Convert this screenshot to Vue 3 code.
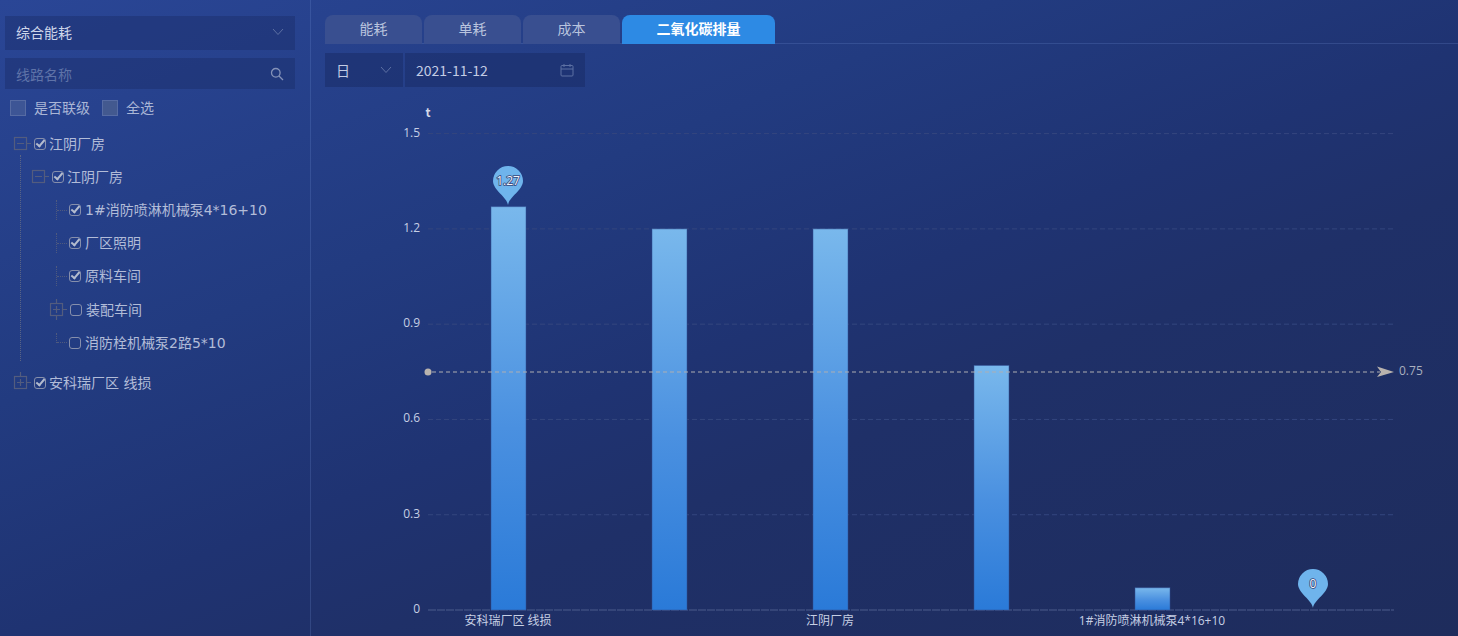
<script setup>
const tabs = ['能耗', '单耗', '成本', '二氧化碳排量']

const treeChildren = [
  { label: '江阴厂房', level: 1, toggle: 'minus', checked: true },
  { label: '1#消防喷淋机械泵4*16+10', level: 2, checked: true },
  { label: '厂区照明', level: 2, checked: true },
  { label: '原料车间', level: 2, checked: true },
  { label: '装配车间', level: 2, toggle: 'plus', checked: false },
  { label: '消防栓机械泵2路5*10', level: 2, checked: false, last: true },
]

const y0 = 610
const perUnit = 317.6
const yOf = (v) => y0 - v * perUnit

const ticks = [1.5, 1.2, 0.9, 0.6, 0.3]
const values = [1.27, 1.2, 1.2, 0.77, 0.07, 0]
const bars = values.map((v, i) => ({ x: 491 + i * 161, y: yOf(v), h: v * perUnit }))
const xLabels = [
  { text: '安科瑞厂区 线损', x: 508 },
  { text: '江阴厂房', x: 830 },
  { text: '1#消防喷淋机械泵4*16+10', x: 1152 },
]
const pins = [
  { text: '1.27', x: 508, tip: 205 },
  { text: '0', x: 1313, tip: 608 },
]
const pinPath = (p) => {
  const top = p.tip - 39
  const cy = top + 15
  return `M${p.x} ${p.tip}C${p.x - 1} ${p.tip - 8} ${p.x - 15} ${cy + 9} ${p.x - 15} ${cy}A15 15 0 1 1 ${p.x + 15} ${cy}C${p.x + 15} ${cy + 9} ${p.x + 1} ${p.tip - 8} ${p.x} ${p.tip}Z`
}
</script>

<template>
  <div class="page">
    <aside class="side">
      <div class="field select-field">
        <span>综合能耗</span>
        <svg class="chev" width="12" height="8" viewBox="0 0 12 8"><path d="M1 1l5 5.5L11 1" /></svg>
      </div>
      <div class="field search-field">
        <span class="placeholder">线路名称</span>
        <svg class="search" width="14" height="14" viewBox="0 0 14 14">
          <circle cx="5.8" cy="5.8" r="4.3" />
          <path d="M9 9l4 4" />
        </svg>
      </div>
      <div class="options">
        <label class="opt"><i class="box"></i><span>是否联级</span></label>
        <label class="opt"><i class="box alt"></i><span>全选</span></label>
      </div>

      <div class="tree">
        <div class="row">
          <svg class="toggle" width="13" height="13" viewBox="0 0 13 13">
            <rect x="0.5" y="0.5" width="12" height="12" />
            <path d="M3 6.5h7M13 6.5h4" />
          </svg>
          <span class="check on"></span>
          <span class="name">江阴厂房</span>
        </div>
        <div class="group">
          <div
            v-for="node in treeChildren"
            :key="node.label"
            class="row"
            :class="['lv' + node.level, { last: node.last }]"
          >
            <svg v-if="node.toggle" class="toggle" width="13" height="13" viewBox="0 0 13 13">
              <rect x="0.5" y="0.5" width="12" height="12" />
              <path v-if="node.toggle === 'minus'" d="M3 6.5h7M13 6.5h4" />
              <path v-else d="M3 6.5h7M6.5 3v7M13 6.5h4M6.5 -4v4M6.5 13v4" />
            </svg>
            <span v-else class="joint"></span>
            <span class="check" :class="{ on: node.checked }"></span>
            <span class="name">{{ node.label }}</span>
          </div>
        </div>
        <div class="row">
          <svg class="toggle" width="13" height="13" viewBox="0 0 13 13">
            <rect x="0.5" y="0.5" width="12" height="12" />
            <path d="M3 6.5h7M6.5 3v7M13 6.5h4M6.5 -4v4" />
          </svg>
          <span class="check on"></span>
          <span class="name">安科瑞厂区 线损</span>
        </div>
      </div>
    </aside>

    <main class="main">
      <div class="tabs">
        <div v-for="(t, i) in tabs" :key="t" class="tab" :class="{ active: i === 3 }">{{ t }}</div>
      </div>
      <div class="filters">
        <div class="field unit">
          <span>日</span>
          <svg class="chev" width="12" height="8" viewBox="0 0 12 8"><path d="M1 1l5 5.5L11 1" /></svg>
        </div>
        <div class="field date">
          <span>2021-11-12</span>
          <svg class="cal" width="14" height="14" viewBox="0 0 14 14">
            <rect x="1" y="2.5" width="12" height="10.5" rx="1" />
            <path d="M1 6h12M4 1v3M10 1v3" />
          </svg>
        </div>
      </div>

      <svg class="chart" width="1147" height="541" viewBox="311 95 1147 541">
        <defs>
          <linearGradient id="barFill" x1="0" y1="0" x2="0" y2="1">
            <stop offset="0" stop-color="#79b8ec" />
            <stop offset="0.55" stop-color="#4a90e0" />
            <stop offset="1" stop-color="#2a7ad8" />
          </linearGradient>
        </defs>

        <text class="axis-name" x="428" y="117" text-anchor="middle">t</text>

        <g v-for="t in ticks" :key="t">
          <line class="grid" x1="428" x2="1394" :y1="yOf(t)" :y2="yOf(t)" />
          <text class="tick" x="420" :y="yOf(t) + 3" text-anchor="end">{{ t }}</text>
        </g>
        <line class="axis" x1="428" x2="1394" :y1="y0" :y2="y0" />
        <text class="tick" x="420" :y="y0 + 3" text-anchor="end">0</text>

        <rect
          v-for="(b, i) in bars"
          :key="i"
          class="bar"
          :x="b.x"
          :y="b.y"
          width="35"
          :height="b.h"
          fill="url(#barFill)"
        />

        <text v-for="l in xLabels" :key="l.text" class="tick" :x="l.x" y="625" text-anchor="middle">{{ l.text }}</text>

        <circle cx="428" cy="372" r="3.5" fill="#b9b3ae" />
        <line class="mark" x1="432" x2="1380" y1="372" y2="372" />
        <path d="M1377 366.5L1394 372L1377 377L1381 372Z" fill="#b9b3ae" />
        <text class="mark-text" x="1399" y="375">0.75</text>

        <g v-for="p in pins" :key="p.text">
          <path :d="pinPath(p)" fill="#6fb4ec" />
          <text class="pin-text" :x="p.x" :y="p.tip - 20" text-anchor="middle">{{ p.text }}</text>
        </g>
      </svg>
    </main>
  </div>
</template>

<style>
html, body {
  margin: 0;
  height: 636px;
  overflow: hidden;
}
</style>

<style scoped>
.page {
  display: flex;
  width: 1458px;
  height: 636px;
  overflow: hidden;
  background: linear-gradient(158deg, #2a4696 0%, #223b80 33%, #1f3372 52%, #1f3068 64%, #1e2c5c 100%);
  color: #c3cce4;
  font-family: "Noto Sans CJK SC", "Noto Sans", sans-serif;
  font-size: 14px;
}

.side {
  width: 311px;
  box-sizing: border-box;
  flex: none;
  padding: 16px 15px 0 5px;
  border-right: 1px solid rgba(120, 150, 220, 0.22);
}
.field {
  display: flex;
  align-items: center;
  justify-content: space-between;
  box-sizing: border-box;
  background: rgba(24, 42, 100, 0.4);
  padding: 0 11px;
}
.select-field {
  height: 34px;
  padding-bottom: 2px;
  color: #cfd6ea;
}
.search-field {
  height: 31px;
  margin-top: 8px;
}
.placeholder {
  color: #5f73a8;
}
.chev path {
  fill: none;
  stroke: #5d70a3;
  stroke-width: 1;
}
.search circle,
.search path {
  fill: none;
  stroke: #8492b8;
  stroke-width: 1.3;
}

.options {
  display: flex;
  gap: 12px;
  margin-top: 10px;
  padding-left: 5px;
  height: 18px;
  line-height: 18px;
}
.opt {
  display: flex;
  align-items: center;
  gap: 8px;
  color: #aab6d6;
}
.opt span {
  margin-top: -2px;
}
.box {
  width: 16px;
  height: 16px;
  box-sizing: border-box;
  background: #3d5595;
  border: 1px solid #566ba3;
}
.box.alt {
  background: #43598f;
}

.tree {
  margin-top: 10px;
  padding-left: 9px;
}
.row {
  display: flex;
  align-items: center;
  height: 33.2px;
  line-height: 20px;
  color: #b2bcd8;
}
.name {
  margin-left: 3px;
  white-space: nowrap;
  font-family: "DejaVu Sans", "Noto Sans CJK SC", sans-serif;
}
.lv2 .name {
  margin-left: 4px;
}
.toggle {
  flex: none;
  margin-right: 7px;
  overflow: visible;
}
.toggle rect,
.toggle path {
  fill: none;
  stroke: #535c7e;
  stroke-width: 1.2;
}
.check {
  position: relative;
  flex: none;
  width: 12px;
  height: 12px;
  box-sizing: border-box;
  border: 1.5px solid #868fac;
  border-radius: 3px;
}
.check.on::after {
  content: "";
  position: absolute;
  left: 2.5px;
  top: -1px;
  width: 3px;
  height: 7px;
  border-right: 2px solid #b4bccf;
  border-bottom: 2px solid #b4bccf;
  transform: rotate(40deg);
}

.group {
  margin: -5px 0 5px 6px;
  padding: 5px 0 2px;
  border-left: 1px dotted #5a6485;
}
.lv1 {
  padding-left: 11px;
}
.lv2 {
  padding-left: 29px;
}
.joint {
  position: relative;
  flex: none;
  width: 10px;
  height: 20px;
  margin: 0 3px 0 6px;
  border-left: 1px dotted #4f5a7e;
  box-sizing: border-box;
}
.joint::after {
  content: "";
  position: absolute;
  left: 0;
  top: 10px;
  width: 10px;
  border-top: 1px dotted #4f5a7e;
}
.last .joint {
  height: 10px;
  margin-bottom: 10px;
}
.last .joint::after {
  top: 9px;
}

.main {
  flex: 1;
  min-width: 0;
  padding-top: 15px;
}
.tabs {
  display: flex;
  gap: 2px;
  height: 29px;
  box-sizing: border-box;
  margin-left: 14px;
  border-bottom: 1px solid rgba(120, 150, 220, 0.22);
}
.tab {
  width: 97px;
  height: 29px;
  line-height: 27px;
  text-align: center;
  border-radius: 8px 8px 0 0;
  background: #394f90;
  color: #b9c4de;
}
.tab.active {
  width: 153px;
  background: #2d8ae4;
  color: #fff;
  font-weight: 700;
}

.filters {
  display: flex;
  gap: 2px;
  margin: 9px 0 0 14px;
}
.filters .field {
  height: 34px;
  background: rgba(24, 42, 100, 0.5);
  color: #c3cce4;
}
.unit {
  width: 78px;
}
.date {
  width: 180px;
}
.cal rect,
.cal path {
  fill: none;
  stroke: #5d70a3;
}

.chart {
  display: block;
  margin-top: 8px;
  overflow: hidden;
}
.grid {
  stroke: #34467e;
  stroke-dasharray: 5 3;
}
.axis {
  stroke: #4c5c8c;
  stroke-dasharray: 8 1;
}
.tick {
  fill: #c6cfe4;
  font-size: 12px;
  font-family: "Open Sans", "Noto Sans CJK SC", sans-serif;
}
.axis-name {
  fill: #d4d9e8;
  font-size: 12px;
  font-weight: 600;
}
.bar {
  stroke: rgba(50, 80, 150, 0.5);
  stroke-width: 1;
}
.mark {
  stroke: #aeaeb2;
  stroke-dasharray: 4 3;
}
.mark-text {
  fill: #aab0bf;
  font-size: 12px;
  font-family: "Open Sans", sans-serif;
}
.pin-text {
  fill: #f2f4fa;
  font-size: 12px;
  font-family: "Open Sans", sans-serif;
  stroke: #36467a;
  stroke-width: 1.6;
  paint-order: stroke;
}
</style>
